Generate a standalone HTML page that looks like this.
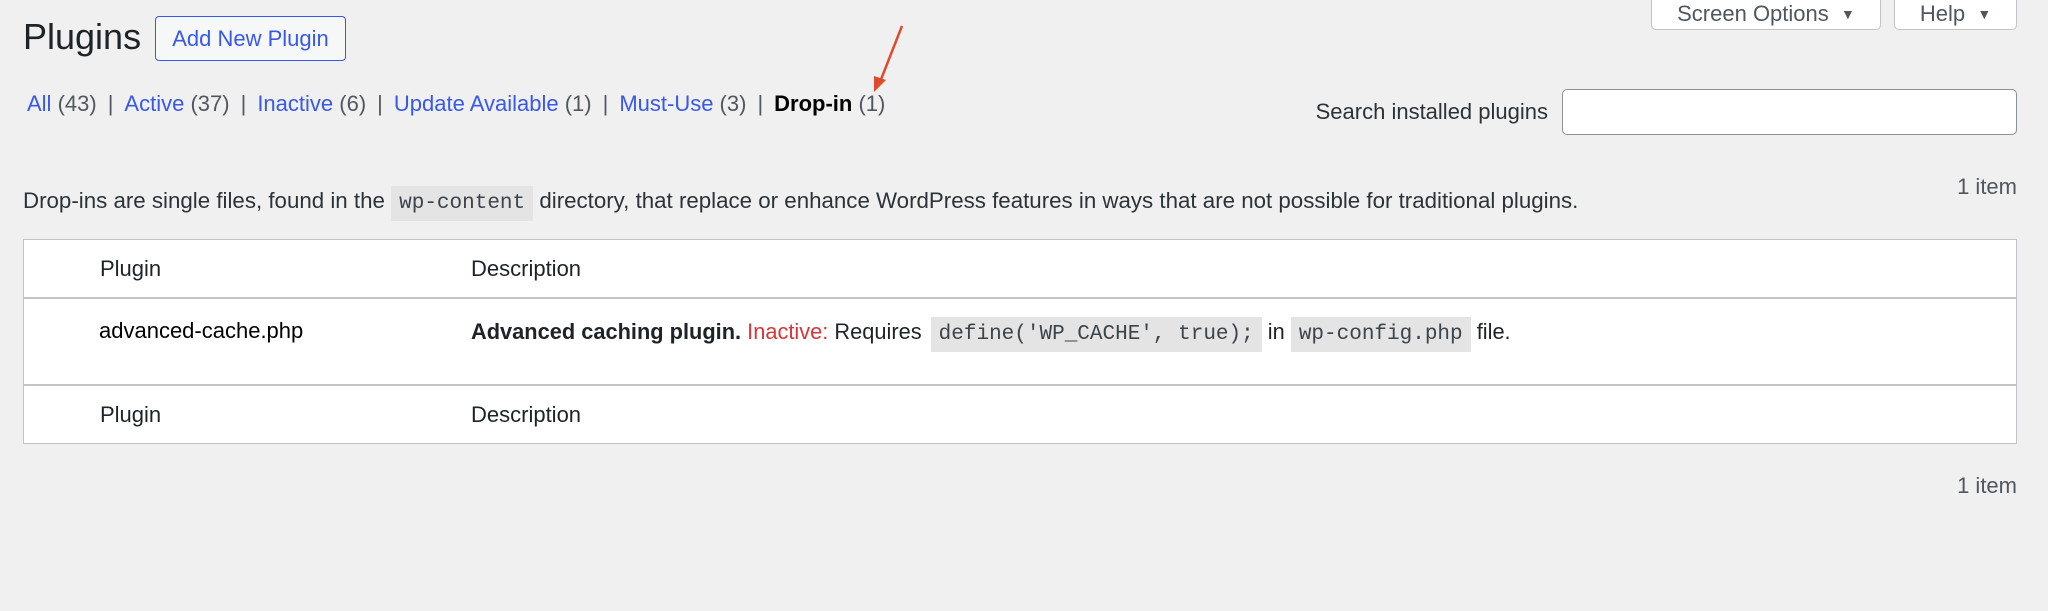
<!DOCTYPE html>
<html><head><meta charset="utf-8"><style>
body{margin:0;width:2048px;height:611px;background:#f0f0f1;font-family:"Liberation Sans",sans-serif;color:#1d2327;position:relative;overflow:hidden;font-size:22px}
.a{position:absolute;white-space:nowrap}
a{color:#3858e9;text-decoration:none}
.btn{position:absolute;border:1.5px solid #3858e9;border-radius:4px;color:#3858e9;background:#f6f7f7;box-sizing:border-box;display:flex;align-items:center;justify-content:center;font-size:22px}
.tab{position:absolute;background:#fff;border:1.5px solid #c3c4c7;border-top:none;border-radius:0 0 5px 5px;box-sizing:border-box;display:flex;align-items:center;justify-content:center;color:#50575e;font-size:22px}
code{font-family:"Liberation Mono",monospace;background:#e4e4e4;padding:6px 8px;font-size:21px;color:#3c434a}
.g{color:#50575e}
.s{margin:0 11px}
</style></head><body>
<div class="a" style="left:23px;top:16px;font-size:36px;">Plugins</div>
<div class="btn" style="left:155px;top:16px;width:191px;height:45px;">Add New Plugin</div>
<div class="tab" style="left:1651px;top:-2px;width:230px;height:32px;">Screen Options&nbsp;&nbsp;<span style="font-size:14px">▼</span></div>
<div class="tab" style="left:1894px;top:-2px;width:123px;height:32px;">Help&nbsp;&nbsp;<span style="font-size:14px">▼</span></div>
<div class="a g" style="left:27px;top:91px;"><a>All</a> (43)<span class="s">|</span><a>Active</a> (37)<span class="s">|</span><a>Inactive</a> (6)<span class="s">|</span><a>Update Available</a> (1)<span class="s">|</span><a>Must-Use</a> (3)<span class="s">|</span><b style="color:#000">Drop-in</b> (1)</div>
<svg class="a" style="left:860px;top:20px" width="60" height="80"><line x1="42" y1="6" x2="20" y2="62" stroke="#e04b2d" stroke-width="2.5"/><polygon points="14,72 14,56 26,60" fill="#e04b2d"/></svg>
<div class="a" style="right:500px;top:99px;color:#2c3338">Search installed plugins</div>
<div class="a" style="left:1562px;top:89px;width:455px;height:46px;background:#fff;border:1.5px solid #8c8f94;border-radius:5px;box-sizing:border-box"></div>
<div class="a g" style="right:31px;top:174px;">1 item</div>
<div class="a" style="left:23px;top:188px;color:#2c3338;font-size:22.3px">Drop-ins are single files, found in the <code>wp-content</code> directory, that replace or enhance WordPress features in ways that are not possible for traditional plugins.</div>
<div class="a" style="left:23px;top:239px;width:1994px;height:205px;background:#fff;border:1.5px solid #c3c4c7;box-sizing:border-box"></div>
<div class="a" style="left:24px;top:297px;width:1992px;height:1.5px;background:#c3c4c7"></div>
<div class="a" style="left:24px;top:384px;width:1992px;height:1.5px;background:#c3c4c7"></div>
<div class="a" style="left:100px;top:256px;">Plugin</div>
<div class="a" style="left:471px;top:256px;">Description</div>
<div class="a" style="left:99px;top:318px;color:#000">advanced-cache.php</div>
<div class="a" style="left:471px;top:319px;font-size:21.8px"><b>Advanced caching plugin.</b> <span style="color:#d63638">Inactive:</span> Requires <code style="margin-left:3px">define('WP_CACHE', true);</code> in <code>wp-config.php</code> file.</div>
<div class="a" style="left:100px;top:402px;">Plugin</div>
<div class="a" style="left:471px;top:402px;">Description</div>
<div class="a g" style="right:31px;top:473px;">1 item</div>
</body></html>
